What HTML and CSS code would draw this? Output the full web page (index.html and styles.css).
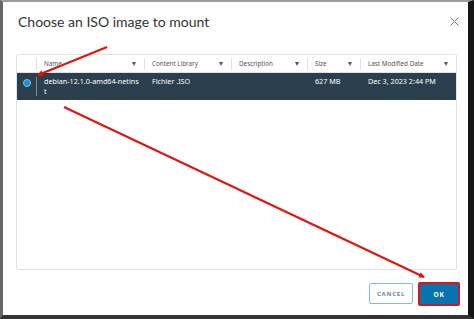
FILE: index.html
```html
<!DOCTYPE html>
<html lang="en">

<head>
  <meta charset="UTF-8">
  <title>Choose an ISO image to mount</title>
  <link rel="stylesheet" href="styles.css">
</head>

<body>
  <div class="modal">
    <div class="modal-head">
      <h1>Choose an ISO image to mount</h1>
      <svg class="close" width="9" height="9" viewBox="0 0 9 9">
        <path d="M0.5 0.5 L8.5 8.5 M8.5 0.5 L0.5 8.5" stroke="#777" stroke-width="1" />
      </svg>
    </div>

    <div class="grid">
      <div class="row head">
        <div class="cell sel"></div>
        <div class="cell">Name<i class="funnel"></i></div>
        <div class="cell">Content Library<i class="funnel"></i></div>
        <div class="cell">Description<i class="funnel"></i></div>
        <div class="cell">Size<i class="funnel"></i></div>
        <div class="cell">Last Modified Date<i class="funnel"></i></div>
      </div>
      <div class="row active">
        <div class="cell sel"><span class="radio"></span></div>
        <div class="cell name">debian-12.1.0-amd64-netinst</div>
        <div class="cell">Fichier .ISO</div>
        <div class="cell"></div>
        <div class="cell">627 MB</div>
        <div class="cell">Dec 3, 2023 2:44 PM</div>
      </div>
    </div>

    <div class="modal-foot">
      <button class="btn outline">CANCEL</button>
      <button class="btn primary">OK</button>
    </div>
  </div>

  <!-- red annotation arrows laid over the dialog -->
  <svg class="marks" width="474" height="319" viewBox="0 0 474 319">
    <defs>
      <marker id="tip" markerWidth="6" markerHeight="6" refX="5" refY="3" orient="auto" markerUnits="userSpaceOnUse">
        <path d="M0 0 L6 3 L0 6 z" fill="#e3120b" />
      </marker>
    </defs>
    <line x1="107" y1="47" x2="38" y2="75" stroke="#e3120b" stroke-width="2" marker-end="url(#tip)" />
    <line x1="64" y1="107" x2="424" y2="277" stroke="#e3120b" stroke-width="2" marker-end="url(#tip)" />
  </svg>
</body>

</html>
```

FILE: styles.css
```css
* {
  padding: 0;
  margin: 0;
  box-sizing: border-box;
}

body {
  position: relative;
  width: 474px;
  height: 319px;
  border-top: 2px solid #9b9b9b;
  border-left: 3px solid #666;
  border-right: 6px solid #161616;
  border-bottom: 4px solid #333;
  background: #fff;
  font-family: "Noto Sans", sans-serif;
  color: #333;
  overflow: hidden;
}

.modal {
  display: flex;
  flex-direction: column;
  height: 100%;
  padding: 0 8px 0 13px;
}

.modal-head {
  display: flex;
  align-items: center;
  justify-content: space-between;
  height: 38px;
  padding-left: 2px;
}

.modal-head h1 {
  font-family: Lato, sans-serif;
  font-size: 14px;
  font-weight: 400;
  color: #333;
  letter-spacing: 0;
}

.close {
  margin-right: 1px;
  margin-top: 1px;
}

.grid {
  margin-top: 14px;
  width: 441px;
  height: 216px;
  border: 1px solid #dde3e8;
  border-radius: 2px;
}

.row {
  display: grid;
  grid-template-columns: 20px 108px 87px 76px 53px 95px;
}

.head {
  height: 18px;
  align-items: center;
  font-size: 6.3px;
  color: #565656;
  border-bottom: 1px solid #dde3e8;
}

.head .cell {
  display: flex;
  align-items: center;
  justify-content: space-between;
  height: 12px;
  padding: 0 8px 0 7px;
  border-right: 1px solid #dde3e8;
}

.head .cell:last-child {
  border-right: none;
}

.funnel {
  width: 0;
  height: 0;
  border-left: 2.5px solid transparent;
  border-right: 2.5px solid transparent;
  border-top: 4px solid #555;
}

.active {
  height: 27px;
  background: #2c3f4e;
  color: #fff;
  font-size: 7.2px;
}

.active .cell {
  padding: 4px 7px 0;
  line-height: 9.5px;
}

.active .name {
  padding-right: 4px;
  word-break: break-all;
}

.active .sel {
  display: flex;
  justify-content: center;
  padding: 0;
  margin: 4px 0;
  border-right: 1px solid #7d8b96;
  align-items: center;
}

.radio {
  width: 8px;
  height: 8px;
  border-radius: 50%;
  background: #1a8fd4;
  border: 1px solid #7cc3ea;
  margin-top: -7px;
}

.modal-foot {
  display: flex;
  justify-content: flex-end;
  gap: 5px;
  margin-top: 12px;
}

.btn {
  height: 21px;
  font-family: "Noto Sans", sans-serif;
  font-size: 6px;
  font-weight: 700;
  letter-spacing: 0.8px;
  border-radius: 2px;
}

.outline {
  width: 44px;
  margin-top: 1px;
  background: #fff;
  color: #5f8aa6;
  border: 1px solid #7fbcdc;
}

.primary {
  width: 42px;
  height: 24px;
  font-size: 6.5px;
  background: #0a72ad;
  color: #fff;
  border: 2px solid #d8141c;
}

.marks {
  position: absolute;
  top: -2px;
  left: -3px;
}
```
